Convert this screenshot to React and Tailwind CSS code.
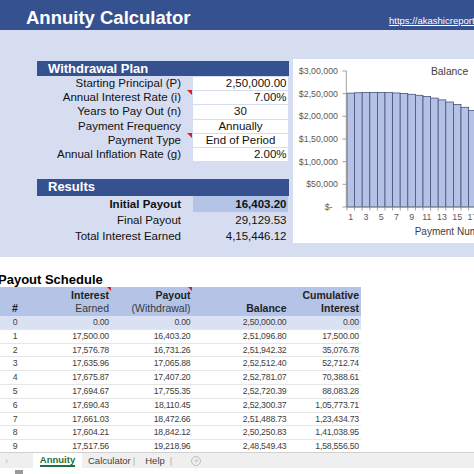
import React from 'react';

const plan = [
  { label: 'Starting Principal (P)', value: '2,50,000.00', align: 'text-right' },
  { label: 'Annual Interest Rate (i)', value: '7.00%', align: 'text-right', note: true },
  { label: 'Years to Pay Out (n)', value: '30', align: 'text-center' },
  { label: 'Payment Frequency', value: 'Annually', align: 'text-center' },
  { label: 'Payment Type', value: 'End of Period', align: 'text-center', note: true },
  { label: 'Annual Inflation Rate (g)', value: '2.00%', align: 'text-right' },
];

const schedule = [
  ['0', '0.00', '0.00', '2,50,000.00', '0.00'],
  ['1', '17,500.00', '16,403.20', '2,51,096.80', '17,500.00'],
  ['2', '17,576.78', '16,731.26', '2,51,942.32', '35,076.78'],
  ['3', '17,635.96', '17,065.88', '2,52,512.40', '52,712.74'],
  ['4', '17,675.87', '17,407.20', '2,52,781.07', '70,388.61'],
  ['5', '17,694.67', '17,755.35', '2,52,720.39', '88,083.28'],
  ['6', '17,690.43', '18,110.45', '2,52,300.37', '1,05,773.71'],
  ['7', '17,661.03', '18,472.66', '2,51,488.73', '1,23,434.73'],
  ['8', '17,604.21', '18,842.12', '2,50,250.83', '1,41,038.95'],
  ['9', '17,517.56', '19,218.96', '2,48,549.43', '1,58,556.50'],
];

// balance after each payment, used for the bars
const balances = [];
{
  let b = 250000;
  let p = 16403.2;
  for (let n = 1; n <= 30; n++) {
    b = b * 1.07 - p;
    balances.push(b);
    p *= 1.02;
  }
}

const Note = () => (
  <span className="absolute top-0 right-[1px] w-0 h-0 border-t-[5px] border-l-[5px] border-t-[#e01b1b] border-l-transparent" />
);

const BalanceChart = () => {
  const zero = 148;
  const step = 22.67;
  const yLabels = ['$3,00,000', '$2,50,000', '$2,00,000', '$1,50,000', '$1,00,000', '$50,000', '$-'];
  const bw = 7.6;
  return (
    <svg width="181" height="184" className="block">
      <text x="138" y="12" dy="0.35em" fontSize="10.3" fill="#404040" fontFamily="Liberation Sans, Arial, sans-serif">
        Balance
      </text>
      {yLabels.map((l, i) => {
        const y = zero - (6 - i) * step;
        return (
          <g key={l}>
            <text
              x={l === '$-' ? 39.5 : 45}
              y={y}
              dy="0.35em"
              textAnchor="end"
              fontSize="8.8"
              fill="#595959"
              fontFamily="Liberation Sans, Arial, sans-serif"
            >
              {l}
            </text>
            <line x1="49.5" x2="53.3" y1={y} y2={y} stroke="#8a8a8a" strokeWidth="0.8" />
          </g>
        );
      })}
      {balances.map((b, i) => {
        const h = (b * step) / 50000;
        return (
          <rect
            key={i}
            x={54 + i * bw}
            y={zero - h}
            width={bw}
            height={h}
            fill="#b5c2e6"
            stroke="#46557f"
            strokeWidth="0.8"
          />
        );
      })}
      <line x1="53.3" x2="53.3" y1={zero - 6 * step} y2={zero} stroke="#8a8a8a" strokeWidth="0.8" />
      <line x1="53.3" x2="181" y1={zero} y2={zero} stroke="#8a8a8a" strokeWidth="0.8" />
      {balances.map((_, i) => (
        <line key={i} x1={54 + i * bw} x2={54 + i * bw} y1={zero} y2={zero + 3.5} stroke="#8a8a8a" strokeWidth="0.8" />
      ))}
      {balances.map((_, i) =>
        i % 2 === 0 ? (
          <text
            key={i}
            x={54 + i * bw + bw / 2}
            y="158"
            dy="0.35em"
            textAnchor="middle"
            fontSize="8.8"
            fill="#595959"
            fontFamily="Liberation Sans, Arial, sans-serif"
          >
            {i + 1}
          </text>
        ) : null
      )}
      <text x="121.7" y="172.7" dy="0.35em" fontSize="10" fill="#404040" fontFamily="Liberation Sans, Arial, sans-serif">
        Payment Number
      </text>
    </svg>
  );
};

const App = () => {
  return (
    <div className="w-[474px] h-[474px] overflow-hidden bg-white font-['Liberation_Sans',Arial,sans-serif] text-[#111]">
      {/* Title bar */}
      <div className="h-[30px] bg-[#36518f] flex items-start pl-[26px] overflow-hidden">
        <div className="w-[363px] shrink-0 mt-[8px] leading-[20px] text-[18.5px] font-bold text-white whitespace-nowrap">
          Annuity Calculator
        </div>
        <div className="mt-[15px] leading-[12px] text-[9.5px] text-white underline whitespace-nowrap">
          https://akashicreports.com/
        </div>
      </div>

      {/* Light band */}
      <div className="h-[227px] bg-[#d6ddf0] flex items-start pt-[29px]">
        <div className="ml-[37px] w-[252px] mt-[1.7px] text-[11.5px]">
          <div className="h-[15px] leading-[15px] bg-[#36518f] text-white font-bold text-[13px] pl-[11px]">
            Withdrawal Plan
          </div>
          {plan.map((r) => (
            <div key={r.label} className="flex h-[14.3px]">
              <div className="relative w-[156px] pr-[12px] text-right leading-[14.3px] whitespace-nowrap">
                {r.label}
                {r.note && <Note />}
              </div>
              <div
                className={`w-[95px] h-full border-t border-[#d6ddf0] bg-white leading-[13px] px-[1.5px] whitespace-nowrap ${r.align}`}
              >
                {r.value}
              </div>
            </div>
          ))}

          <div className="mt-[18px] h-[16.5px] leading-[16.5px] bg-[#36518f] text-white font-bold text-[13px] pl-[11px]">
            Results
          </div>
          <div className="flex h-[16px] leading-[16px] font-bold">
            <div className="w-[156px] pr-[12px] text-right">Initial Payout</div>
            <div className="w-[95px] bg-[#b4c4e7] text-right pr-[1.5px]">16,403.20</div>
          </div>
          <div className="flex h-[16px] leading-[16px]">
            <div className="w-[156px] pr-[12px] text-right">Final Payout</div>
            <div className="w-[95px] text-right pr-[1.5px]">29,129.53</div>
          </div>
          <div className="flex h-[16px] leading-[16px]">
            <div className="w-[156px] pr-[12px] text-right">Total Interest Earned</div>
            <div className="w-[95px] text-right pr-[1.5px]">4,15,446.12</div>
          </div>
        </div>

        <div className="ml-[4.5px] w-[181px] h-[184px] bg-white shrink-0">
          <BalanceChart />
        </div>
      </div>

      {/* Payout schedule */}
      <div className="mt-[16px] h-[14px] leading-[14px] text-[13px] font-bold -ml-[2px] text-black">
        Payout Schedule
      </div>
      <div className="h-[165px] overflow-hidden w-[361px]">
        <div className="grid grid-cols-[30px_81px_81px_96px_73px] h-[29px] bg-[#b4c4e7] text-[10.5px] leading-[13px] py-[1.5px] text-[#222]">
          <div className="flex flex-col items-center">
            <span>&nbsp;</span>
            <span className="font-bold">#</span>
          </div>
          <div className="relative flex flex-col items-end pr-[2px]">
            <span className="font-bold">Interest</span>
            <span className="text-[#3a3a3a]">Earned</span>
            <span className="absolute -top-[1.5px] right-0 w-0 h-0 border-t-[4px] border-l-[4px] border-t-[#e01b1b] border-l-transparent" />
          </div>
          <div className="relative flex flex-col items-end pr-[1.5px]">
            <span className="font-bold">Payout</span>
            <span className="text-[#3a3a3a]">(Withdrawal)</span>
            <span className="absolute -top-[1.5px] right-0 w-0 h-0 border-t-[4px] border-l-[4px] border-t-[#e01b1b] border-l-transparent" />
          </div>
          <div className="flex flex-col items-end pr-[1.5px]">
            <span>&nbsp;</span>
            <span className="font-bold">Balance</span>
          </div>
          <div className="flex flex-col items-end pr-[2px]">
            <span className="font-bold">Cumulative</span>
            <span className="font-bold">Interest</span>
          </div>
        </div>
        {schedule.map((row, i) => (
          <div
            key={row[0]}
            className={`grid grid-cols-[30px_81px_81px_96px_73px] h-[13.8px] leading-[13px] text-[8.7px] tracking-[-0.2px] text-[#404040] border-b border-[#e6e6e6] ${
              i === 0 ? 'bg-[#dae1f3]' : 'bg-white'
            }`}
          >
            <div className="text-center">{row[0]}</div>
            <div className="text-right pr-[2px]">{row[1]}</div>
            <div className="text-right pr-[1.5px]">{row[2]}</div>
            <div className="text-right pr-[1.5px]">{row[3]}</div>
            <div className="text-right pr-[2px]">{row[4]}</div>
          </div>
        ))}
      </div>

      {/* Sheet tabs */}
      <div className="h-[16px] bg-[#efefef] border-t border-[#d0d0d0] flex items-stretch text-[9.5px] text-[#444] whitespace-nowrap">
        <div className="w-[33px] pl-[5px] text-[#b5b5b5] leading-[15px]">›</div>
        <div className="w-[49px] bg-white flex items-center justify-center">
          <span className="font-bold text-[#1e6e40] border-b-2 border-[#1e7145] leading-[11px]">Annuity</span>
        </div>
        <div className="ml-[6px] leading-[15px]">Calculator</div>
        <div className="ml-[2px] leading-[15px] text-[#b0b0b0]">|</div>
        <div className="ml-[10px] leading-[15px]">Help</div>
        <div className="ml-[5px] leading-[15px] text-[#b0b0b0]">|</div>
        <div className="ml-[19px] flex items-center">
          <span className="w-[10px] h-[10px] rounded-full border border-[#bdbdbd] text-[#bdbdbd] text-[9px] leading-[8px] flex items-center justify-center">
            +
          </span>
        </div>
      </div>
      <div className="h-[6px] bg-white">
        <div className="ml-[15px] mt-[2px] w-[8px] h-[4px] bg-[#9a9a9a]" />
      </div>
    </div>
  );
};

export default App;
